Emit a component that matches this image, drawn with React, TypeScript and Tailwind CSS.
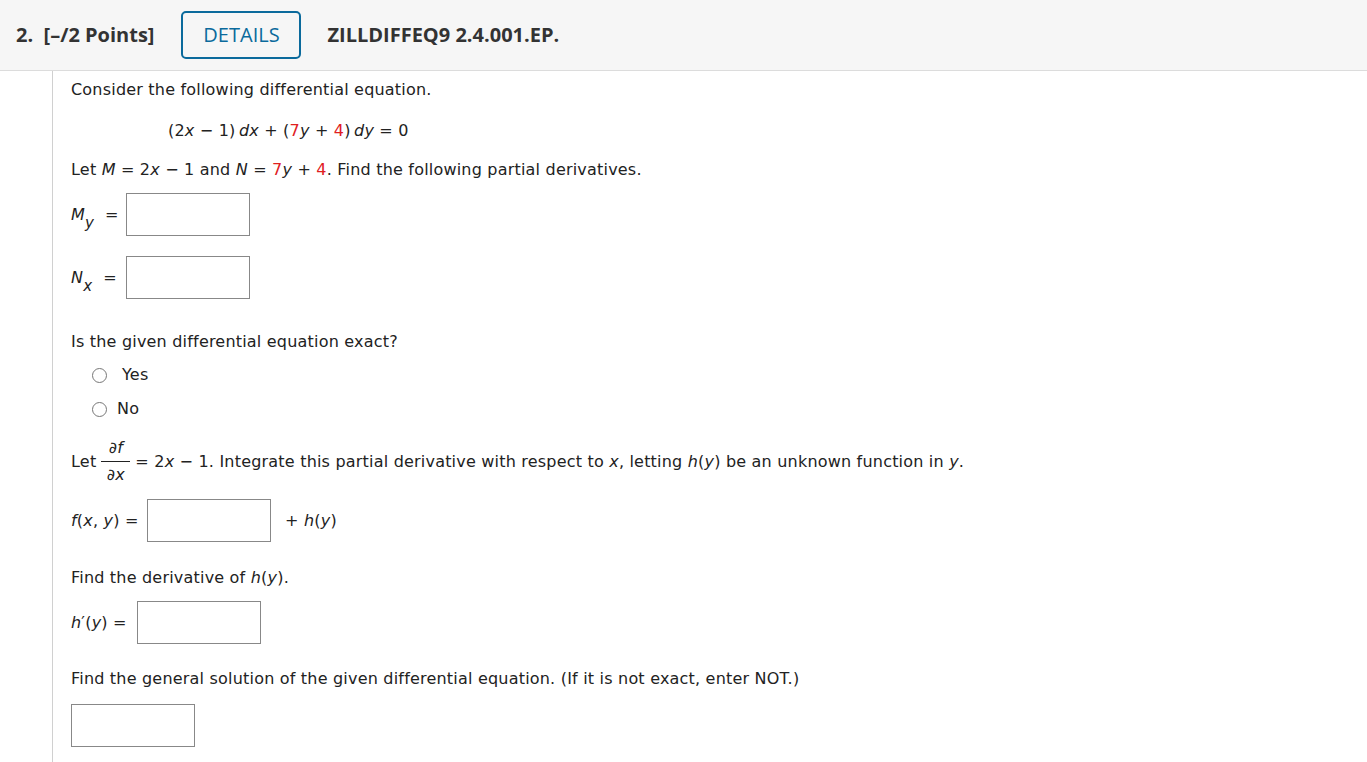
import React from 'react';

function Box({ w = 'w-[124px]' }: { w?: string }) {
  return <div className={`${w} h-[43px] border border-[#888] bg-white`} />;
}

function I({ children }: { children: React.ReactNode }) {
  return <span className="italic">{children}</span>;
}

function Red({ children }: { children: React.ReactNode }) {
  return <span className="text-[#e0201f]">{children}</span>;
}

export default function App() {
  return (
    <div className="min-h-[762px] bg-white text-[#222]">
      {/* Question header */}
      <header className="h-[71px] flex items-center bg-[#f6f6f6] border-b border-[#dcdcdc] font-['Open_Sans',sans-serif]">
        <span className="ml-[16px] text-[20px] font-bold text-[#333]">2.&nbsp; [–/2 Points]</span>
        <button className="ml-[27px] h-[48px] w-[120px] rounded-[5px] border-2 border-[#0b6a9c] text-[20px] font-medium text-[#0b6a9c]">
          DETAILS
        </button>
        <span className="ml-[26px] text-[20px] font-bold text-[#333]">ZILLDIFFEQ9 2.4.001.EP.</span>
      </header>

      <div className="ml-[52px] border-l border-[#d0d0d0] pl-[18px] pt-[9px] pb-[16px]">
        <div className="font-['DejaVu_Sans',sans-serif] text-[16px] tracking-[0.2px] leading-[20px]">
          <p className="h-[20px]">Consider the following differential equation.</p>

          <p className="mt-[21px] ml-[97px] h-[20px]">
            (2<I>x</I> − 1)<I>&thinsp;dx</I> + (<Red>7</Red><I>y</I> + <Red>4</Red>)<I>&thinsp;dy</I> = 0
          </p>

          <p className="mt-[19px] h-[20px]">
            Let <I>M</I> = 2<I>x</I> − 1 and <I>N</I> = <Red>7</Red><I>y</I> + <Red>4</Red>. Find the following partial derivatives.
          </p>

          <div className="mt-[13px] flex items-center">
            <span className="w-[55px] flex items-center">
              <I>M</I>
              <span className="italic relative top-[8px] text-[15px]">y</span>
              <span className="ml-[11px]">=</span>
            </span>
            <Box />
          </div>

          <div className="mt-[20px] flex items-center">
            <span className="w-[55px] flex items-center">
              <I>N</I>
              <span className="italic relative top-[8px] text-[15px]">x</span>
              <span className="ml-[11px]">=</span>
            </span>
            <Box />
          </div>

          <p className="mt-[33px] h-[20px]">Is the given differential equation exact?</p>

          <div className="mt-[13px] ml-[21px] flex items-center">
            <span className="w-[15px] h-[15px] rounded-full border border-[#777] bg-white" />
            <span className="ml-[15px]">Yes</span>
          </div>
          <div className="mt-[14px] ml-[21px] flex items-center">
            <span className="w-[15px] h-[15px] rounded-full border border-[#777] bg-white" />
            <span className="ml-[10px]">No</span>
          </div>

          <div className="mt-[16px] flex items-center">
            <span>Let</span>
            <span className="ml-[5px] mr-[5px] inline-flex flex-col items-center">
              <span className="italic leading-[26px] px-[3px]">∂f</span>
              <span className="h-px w-[29px] bg-[#222]" />
              <span className="italic leading-[26px] px-[3px]">∂x</span>
            </span>
            <span>
              = 2<I>x</I> − 1. Integrate this partial derivative with respect to <I>x</I>, letting <I>h</I>(<I>y</I>) be an unknown function in <I>y</I>.
            </span>
          </div>

          <div className="mt-[11px] flex items-center">
            <span className="w-[76px]">
              <I>f</I>(<I>x</I>, <I>y</I>) =
            </span>
            <Box />
            <span className="ml-[14px]">
              + <I>h</I>(<I>y</I>)
            </span>
          </div>

          <p className="mt-[26px] h-[20px]">
            Find the derivative of <I>h</I>(<I>y</I>).
          </p>

          <div className="mt-[13px] flex items-center">
            <span className="w-[66px]">
              <I>h</I>′(<I>y</I>) =
            </span>
            <Box />
          </div>

          <p className="mt-[25px] h-[20px]">
            Find the general solution of the given differential equation. (If it is not exact, enter NOT.)
          </p>

          <div className="mt-[15px]">
            <Box />
          </div>
        </div>
      </div>
    </div>
  );
}
